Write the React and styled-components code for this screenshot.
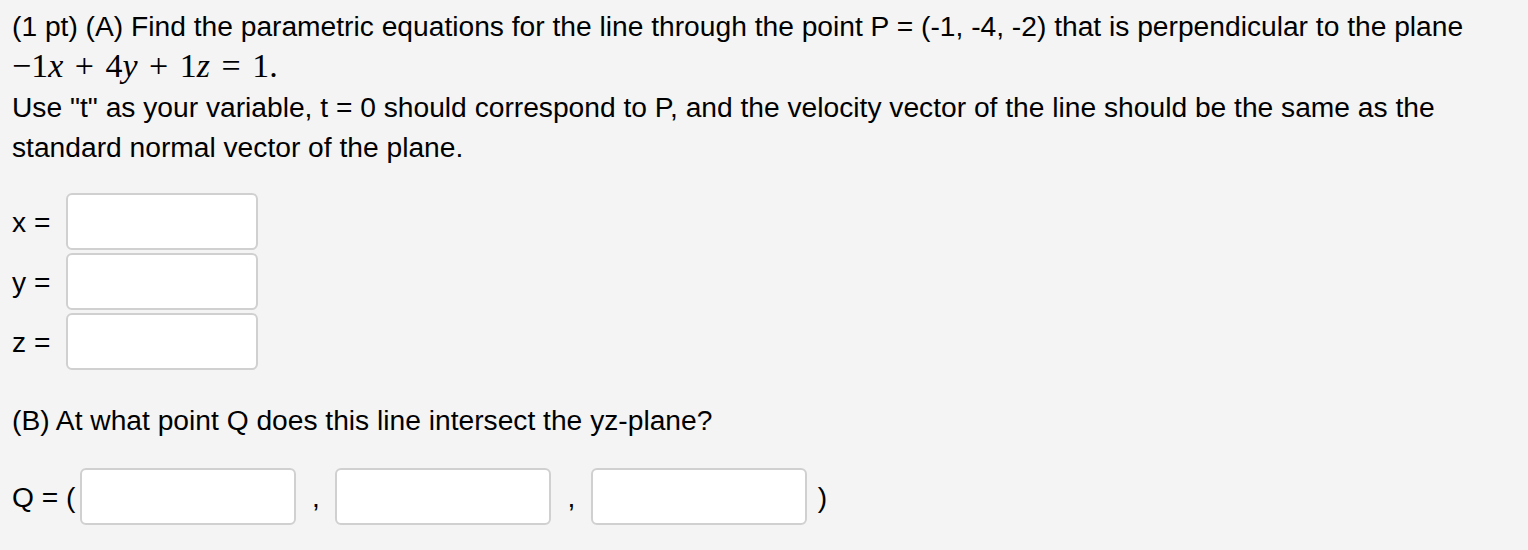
import styled, { createGlobalStyle } from "styled-components";

const Global = createGlobalStyle`
  html, body {
    margin: 0;
    background: #f4f4f4;
  }
  body {
    font-family: "Liberation Sans", Arial, sans-serif;
    color: #000;
  }
`;

const Page = styled.div`
  padding: 6px 12px 0 12px;
  font-size: 28.2px;
  line-height: 40px;
  max-width: 1470px;
`;

const Para = styled.p`
  margin: 0;
`;

const Math = styled.span`
  font-family: "Liberation Serif", "Times New Roman", serif;
  font-size: 34px;
  word-spacing: 3px;
  i {
    font-style: italic;
  }
`;

const Answers = styled.div`
  margin-top: 26px;
  display: flex;
  flex-direction: column;
  gap: 3px;
`;

const Row = styled.div`
  display: flex;
  align-items: center;
  white-space: pre;
`;

const Box = styled.input`
  box-sizing: border-box;
  width: ${(p) => p.w || 192}px;
  height: 57px;
  border: 2px solid #d0d0d0;
  border-radius: 6px;
  background: #fff;
  margin: 0 0 0 ${(p) => p.ml || 0}px;
  padding: 0 8px;
  font-size: 24px;
`;

const Question = styled.p`
  margin: 30px 0 0 0;
`;

const QRow = styled(Row)`
  margin-top: 28px;
`;

const Sep = styled.span`
  display: inline-block;
  width: ${(p) => p.w}px;
  text-align: center;
`;

export default function App() {
  return (
    <>
      <Global />
      <Page>
        <Para>
          (1 pt) (A) Find the parametric equations for the line through the point P = (-1, -4, -2) that is perpendicular to the plane
        </Para>
        <Para>
          <Math>
            −1<i>x</i> + 4<i>y</i> + 1<i>z</i> = 1.
          </Math>
        </Para>
        <Para>
          Use "t" as your variable, t = 0 should correspond to P, and the velocity vector of the line should be the same as the standard normal vector of the plane.
        </Para>
        <Answers>
          <Row>x = <Box ml={8} /></Row>
          <Row>y = <Box ml={8} /></Row>
          <Row>z = <Box ml={8} /></Row>
        </Answers>
        <Question>(B) At what point Q does this line intersect the yz-plane?</Question>
        <QRow>
          Q = (<Box w={216} ml={5} />
          <Sep w={39}>,</Sep>
          <Box w={216} />
          <Sep w={40}>,</Sep>
          <Box w={216} />
          <Sep w={30}>)</Sep>
        </QRow>
      </Page>
    </>
  );
}
